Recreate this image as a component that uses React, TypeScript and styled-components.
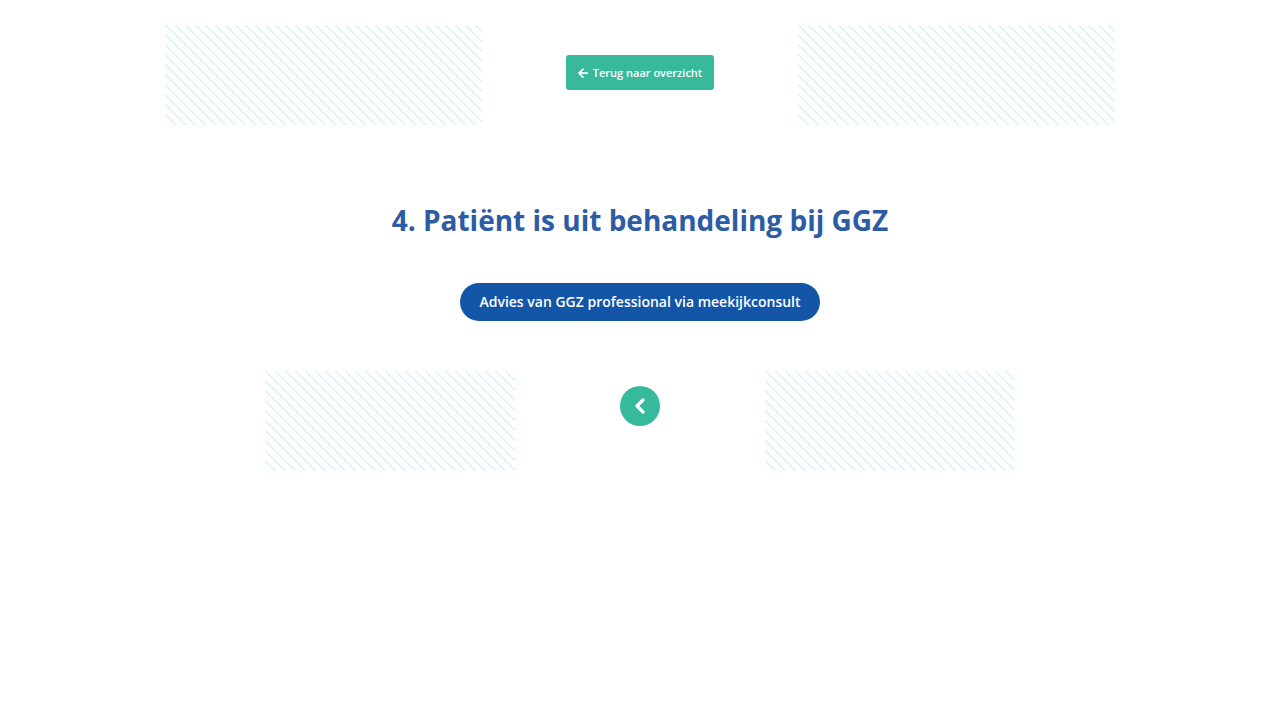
import React from "react";
import styled, { createGlobalStyle } from "styled-components";

const Global = createGlobalStyle`
  html, body { margin: 0; padding: 0; background: #fff; }
  body { font-family: "Open Sans", "Liberation Sans", sans-serif; }
`;

const Page = styled.div`
  display: flex;
  flex-direction: column;
  align-items: center;
  padding-top: 25px;
`;

const Row = styled.div<{ $width: number }>`
  display: grid;
  grid-template-columns: repeat(3, 1fr);
  width: ${(p) => p.$width}px;
  height: 100px;
`;

const Hatch = styled.div`
  background-image: repeating-linear-gradient(
    45deg,
    #d9f2f4 0px,
    #d9f2f4 1.4px,
    transparent 1.4px,
    transparent 7.07px
  );
`;

const Cell = styled.div<{ $top: number }>`
  display: flex;
  justify-content: center;
  align-items: flex-start;
  padding-top: ${(p) => p.$top}px;
`;

const BackButton = styled.a`
  display: inline-flex;
  align-items: center;
  gap: 5px;
  height: 35px;
  padding: 0 12px;
  box-sizing: border-box;
  background: #37b99c;
  color: #fff;
  border-radius: 3px;
  font-size: 11px;
  font-weight: 600;
  text-decoration: none;
`;

const Heading = styled.h1`
  margin: 75px 0 0;
  color: #2b5ca4;
  font-size: 28px;
  font-weight: 700;
  line-height: 40px;
  text-align: center;
`;

const Pill = styled.a`
  display: inline-flex;
  align-items: center;
  justify-content: center;
  margin-top: 43px;
  height: 38px;
  width: 360px;
  padding-bottom: 2px;
  box-sizing: border-box;
  background: #1356a7;
  color: #fff;
  border-radius: 19px;
  font-size: 14px;
  font-weight: 600;
  text-decoration: none;
`;

const Spacer = styled.div`
  height: 50px;
`;

const CircleButton = styled.a`
  display: flex;
  align-items: center;
  justify-content: center;
  width: 40px;
  height: 40px;
  border-radius: 50%;
  background: #37b99c;
`;

const ArrowLeft = () => (
  <svg width="10" height="10" viewBox="0 0 448 448" fill="#fff">
    <path d="M257 422l-22 22c-9 9-25 9-34 0L7 251c-9-9-9-25 0-34L201 23c9-9 25-9 34 0l22 22c10 10 9 25 0 35L137 194h287c13 0 24 11 24 24v32c0 13-11 24-24 24H137l120 114c10 9 10 25 0 34z" />
  </svg>
);

const Chevron = () => (
  <svg width="12" height="16" viewBox="0 0 12 16">
    <path d="M9 2 L3 8 L9 14" stroke="#fff" strokeWidth="3.2" fill="none" strokeLinecap="round" strokeLinejoin="round" />
  </svg>
);

export default function App() {
  return (
    <>
      <Global />
      <Page>
        <Row $width={950}>
          <Hatch />
          <Cell $top={30}>
            <BackButton href="#">
              <ArrowLeft />
              Terug naar overzicht
            </BackButton>
          </Cell>
          <Hatch />
        </Row>
        <Heading>4. Patiënt is uit behandeling bij GGZ</Heading>
        <Pill href="#">Advies van GGZ professional via meekijkconsult</Pill>
        <Spacer />
        <Row $width={750}>
          <Hatch />
          <Cell $top={15}>
            <CircleButton href="#">
              <Chevron />
            </CircleButton>
          </Cell>
          <Hatch />
        </Row>
      </Page>
    </>
  );
}
